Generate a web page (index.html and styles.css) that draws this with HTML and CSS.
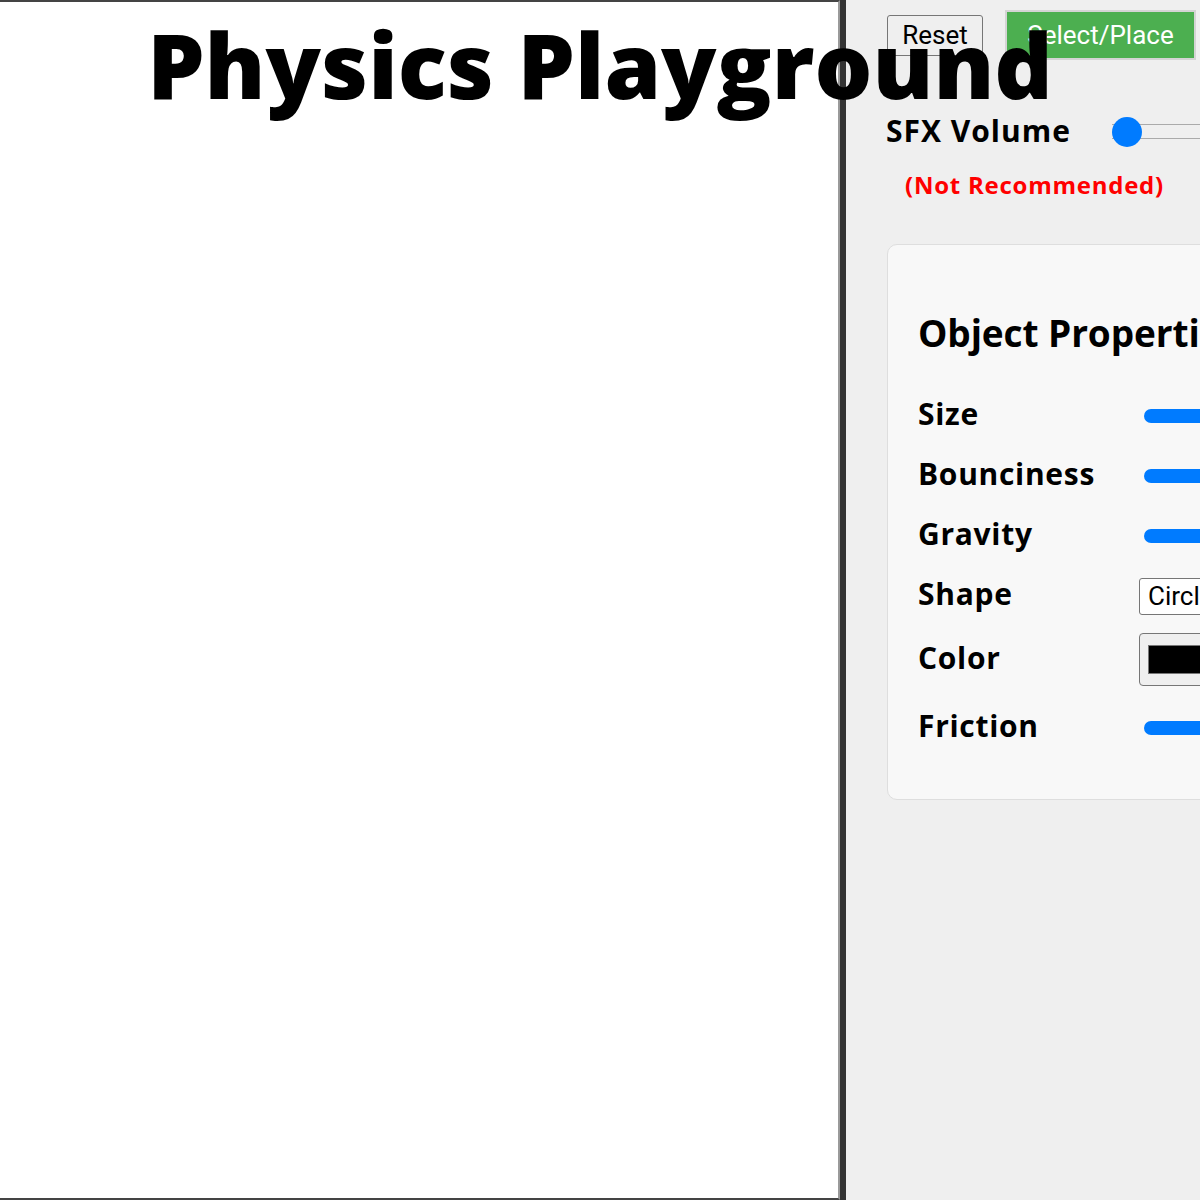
FILE: index.html
```html
<!DOCTYPE html>
<html lang="en">
<head>
<meta charset="utf-8">
<title>Physics Playground</title>
<link rel="stylesheet" href="styles.css">
</head>
<body>
<h1 class="title">Physics Playground</h1>
<div class="stage"></div>
<aside class="panel">
  <div class="toolbar">
    <button class="btn btn-reset">Reset</button>
    <button class="btn btn-mode">Select/Place</button>
  </div>
  <div class="sfx-row">
    <label class="sfx-label" for="sfx">SFX Volume</label>
    <input class="sfx-range" id="sfx" type="range" min="0" max="100" value="0">
  </div>
  <p class="warning">(Not Recommended)</p>
  <section class="card">
    <h2 class="card-title">Object Properties</h2>
    <div class="prop-row">
      <label class="prop-label">Size</label>
      <input class="prop-range" type="range" min="0" max="100" value="50">
    </div>
    <div class="prop-row">
      <label class="prop-label">Bounciness</label>
      <input class="prop-range" type="range" min="0" max="100" value="50">
    </div>
    <div class="prop-row">
      <label class="prop-label">Gravity</label>
      <input class="prop-range" type="range" min="0" max="100" value="50">
    </div>
    <div class="prop-row">
      <label class="prop-label">Shape</label>
      <select class="prop-select">
        <option>Circle</option>
        <option>Square</option>
      </select>
    </div>
    <div class="prop-row prop-row-tall">
      <label class="prop-label">Color</label>
      <input class="prop-color" type="color" value="#000000">
    </div>
    <div class="prop-row">
      <label class="prop-label">Friction</label>
      <input class="prop-range" type="range" min="0" max="100" value="50">
    </div>
  </section>
</aside>
</body>
</html>
```
FILE: styles.css
```css
html, body {
  margin: 0;
  padding: 0;
  overflow: hidden;
  height: 1200px;
}

body {
  display: flex;
  font-family: "Open Sans", "Liberation Sans", sans-serif;
  background: #efefef;
  color: #000;
  position: relative;
}

.title {
  position: absolute;
  top: 19px;
  left: 0;
  width: 1200px;
  margin: 0;
  text-align: center;
  font-family: "Open Sans", sans-serif;
  font-weight: 800;
  font-size: 91px;
  line-height: 1;
  z-index: 2;
  pointer-events: none;
}

.stage {
  flex: none;
  width: 838px;
  height: 1196px;
  background: #fff;
  border-top: 2px solid #444;
  border-bottom: 2px solid #444;
  border-right: 2px solid #9a9a9a;
}

.panel {
  flex: none;
  width: 600px;
  height: 1200px;
  background: #efefef;
  border-left: 6px solid #333;
  padding-left: 40px;
  box-sizing: border-box;
}

.toolbar {
  display: flex;
  align-items: center;
  gap: 22px;
  padding-top: 10px;
  padding-left: 1px;
}

.btn {
  font-family: Roboto, "Liberation Sans", sans-serif;
  font-size: 26px;
  cursor: pointer;
}

.btn-reset {
  height: 41px;
  width: 96px;
  padding: 0;
  background: #efefef;
  color: #000;
  border: 1px solid #767676;
  border-radius: 3px;
}

.btn-mode {
  height: 50px;
  width: 191px;
  padding: 0;
  background: #4caf50;
  color: #fff;
  border: 2px solid #d4d4d4;
  border-radius: 0;
}

.sfx-row {
  display: flex;
  align-items: center;
  gap: 41px;
  margin-top: 51px;
  height: 41px;
}

.sfx-label {
  font-weight: 700;
  font-size: 30px;
  letter-spacing: 1px;
  line-height: 41px;
  margin-bottom: 3px;
  white-space: nowrap;
}

.sfx-range {
  -webkit-appearance: none;
  appearance: none;
  width: 300px;
  height: 30px;
  margin: 0;
  background: transparent;
}

.sfx-range::-webkit-slider-runnable-track {
  height: 15px;
  box-sizing: border-box;
  border-top: 1px solid #aaa;
  border-bottom: 1px solid #aaa;
  background: transparent;
}

.sfx-range::-webkit-slider-thumb {
  -webkit-appearance: none;
  width: 30px;
  height: 30px;
  border-radius: 50%;
  background: #007bff;
  margin-top: -8px;
}

.warning {
  margin: 16px 0 0 19px;
  color: #f00;
  font-weight: 700;
  font-size: 24px;
  letter-spacing: 0.75px;
  line-height: 33px;
}

.card {
  margin-top: 43px;
  margin-left: 1px;
  width: 480px;
  box-sizing: border-box;
  background: #f8f8f8;
  border: 1px solid #dedede;
  border-radius: 10px;
  padding: 30px 30px 34px;
}

.card-title {
  margin: 33px 0 35px;
  font-weight: 700;
  font-size: 37px;
  letter-spacing: -0.1px;
  line-height: 50px;
  white-space: nowrap;
}

.prop-row {
  display: grid;
  grid-template-columns: 221px 1fr;
  align-items: center;
  height: 41px;
  margin-bottom: 19px;
}

.prop-row-tall {
  height: 53px;
}

.prop-label {
  font-weight: 700;
  font-size: 30px;
  letter-spacing: 0.7px;
  line-height: 41px;
  margin-bottom: 5px;
  white-space: nowrap;
}

.prop-range {
  -webkit-appearance: none;
  appearance: none;
  width: 300px;
  height: 14px;
  margin: 0 0 0 5px;
  background: transparent;
}

.prop-range::-webkit-slider-runnable-track {
  height: 14px;
  border-radius: 7px;
  background: #007bff;
}

.prop-range::-webkit-slider-thumb {
  -webkit-appearance: none;
  width: 30px;
  height: 30px;
  border-radius: 50%;
  background: #007bff;
  margin-top: -8px;
}

.prop-select {
  width: 160px;
  height: 37px;
  font-family: Roboto, "Liberation Sans", sans-serif;
  font-size: 26px;
  padding: 0 0 0 4px;
  background: #fff;
  border: 1px solid #767676;
  border-radius: 3px;
  color: #000;
}

.prop-color {
  -webkit-appearance: none;
  appearance: none;
  width: 160px;
  height: 53px;
  padding: 11px 8px;
  box-sizing: border-box;
  background: #efefef;
  border: 1px solid #767676;
  border-radius: 4px;
}

.prop-color::-webkit-color-swatch-wrapper {
  padding: 0;
}

.prop-color::-webkit-color-swatch {
  border: 1px solid #777;
  border-radius: 0;
}
```
